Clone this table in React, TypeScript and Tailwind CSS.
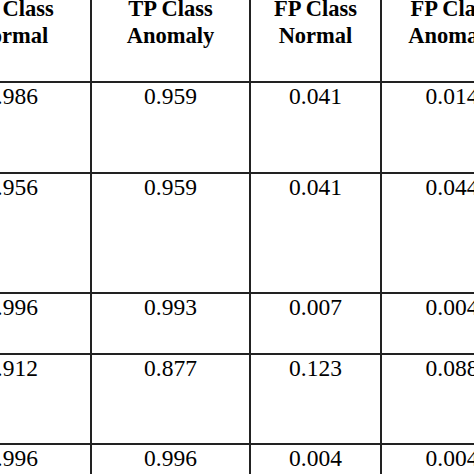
const headers = [
  ["TP Class", "Normal"],
  ["TP Class", "Anomaly"],
  ["FP Class", "Normal"],
  ["FP Class", "Anomaly"],
];

const rows: { h: string; values: string[] }[] = [
  { h: "h-[91px]", values: ["0.986", "0.959", "0.041", "0.014"] },
  { h: "h-[120px]", values: ["0.956", "0.959", "0.041", "0.044"] },
  { h: "h-[61px]", values: ["0.996", "0.993", "0.007", "0.004"] },
  { h: "h-[90px]", values: ["0.912", "0.877", "0.123", "0.088"] },
  { h: "h-[60px]", values: ["0.996", "0.996", "0.004", "0.004"] },
];

// column widths include the 2px right rule
const widths = ["w-[159px]", "w-[159px]", "w-[131px]", "w-[142px]"];

export default function App() {
  return (
    <div
      className="w-[474px] h-[474px] overflow-hidden bg-white text-black"
      style={{ fontFamily: '"Liberation Serif", "Times New Roman", serif' }}
    >
      <div className="ml-[-67px] mt-[-5px] w-[600px]">
        {/* header */}
        <div className="flex h-[88px] border-b-2 border-[#222]">
          {headers.map(([a, b], i) => (
            <div
              key={i}
              className={`${widths[i]} shrink-0 border-r-2 border-[#222] text-center text-[22.5px] leading-[27px] font-bold`}
            >
              <div>{a}</div>
              <div>{b}</div>
            </div>
          ))}
        </div>

        {rows.map((r, ri) => (
          <div key={ri} className={`flex ${r.h} border-b-2 border-[#222]`}>
            {r.values.map((v, i) => (
              <div
                key={i}
                className={`${widths[i]} shrink-0 border-r-2 border-[#222] pt-[1px] text-center text-[23.5px] leading-[25px]`}
              >
                {v}
              </div>
            ))}
          </div>
        ))}
      </div>
    </div>
  );
}
